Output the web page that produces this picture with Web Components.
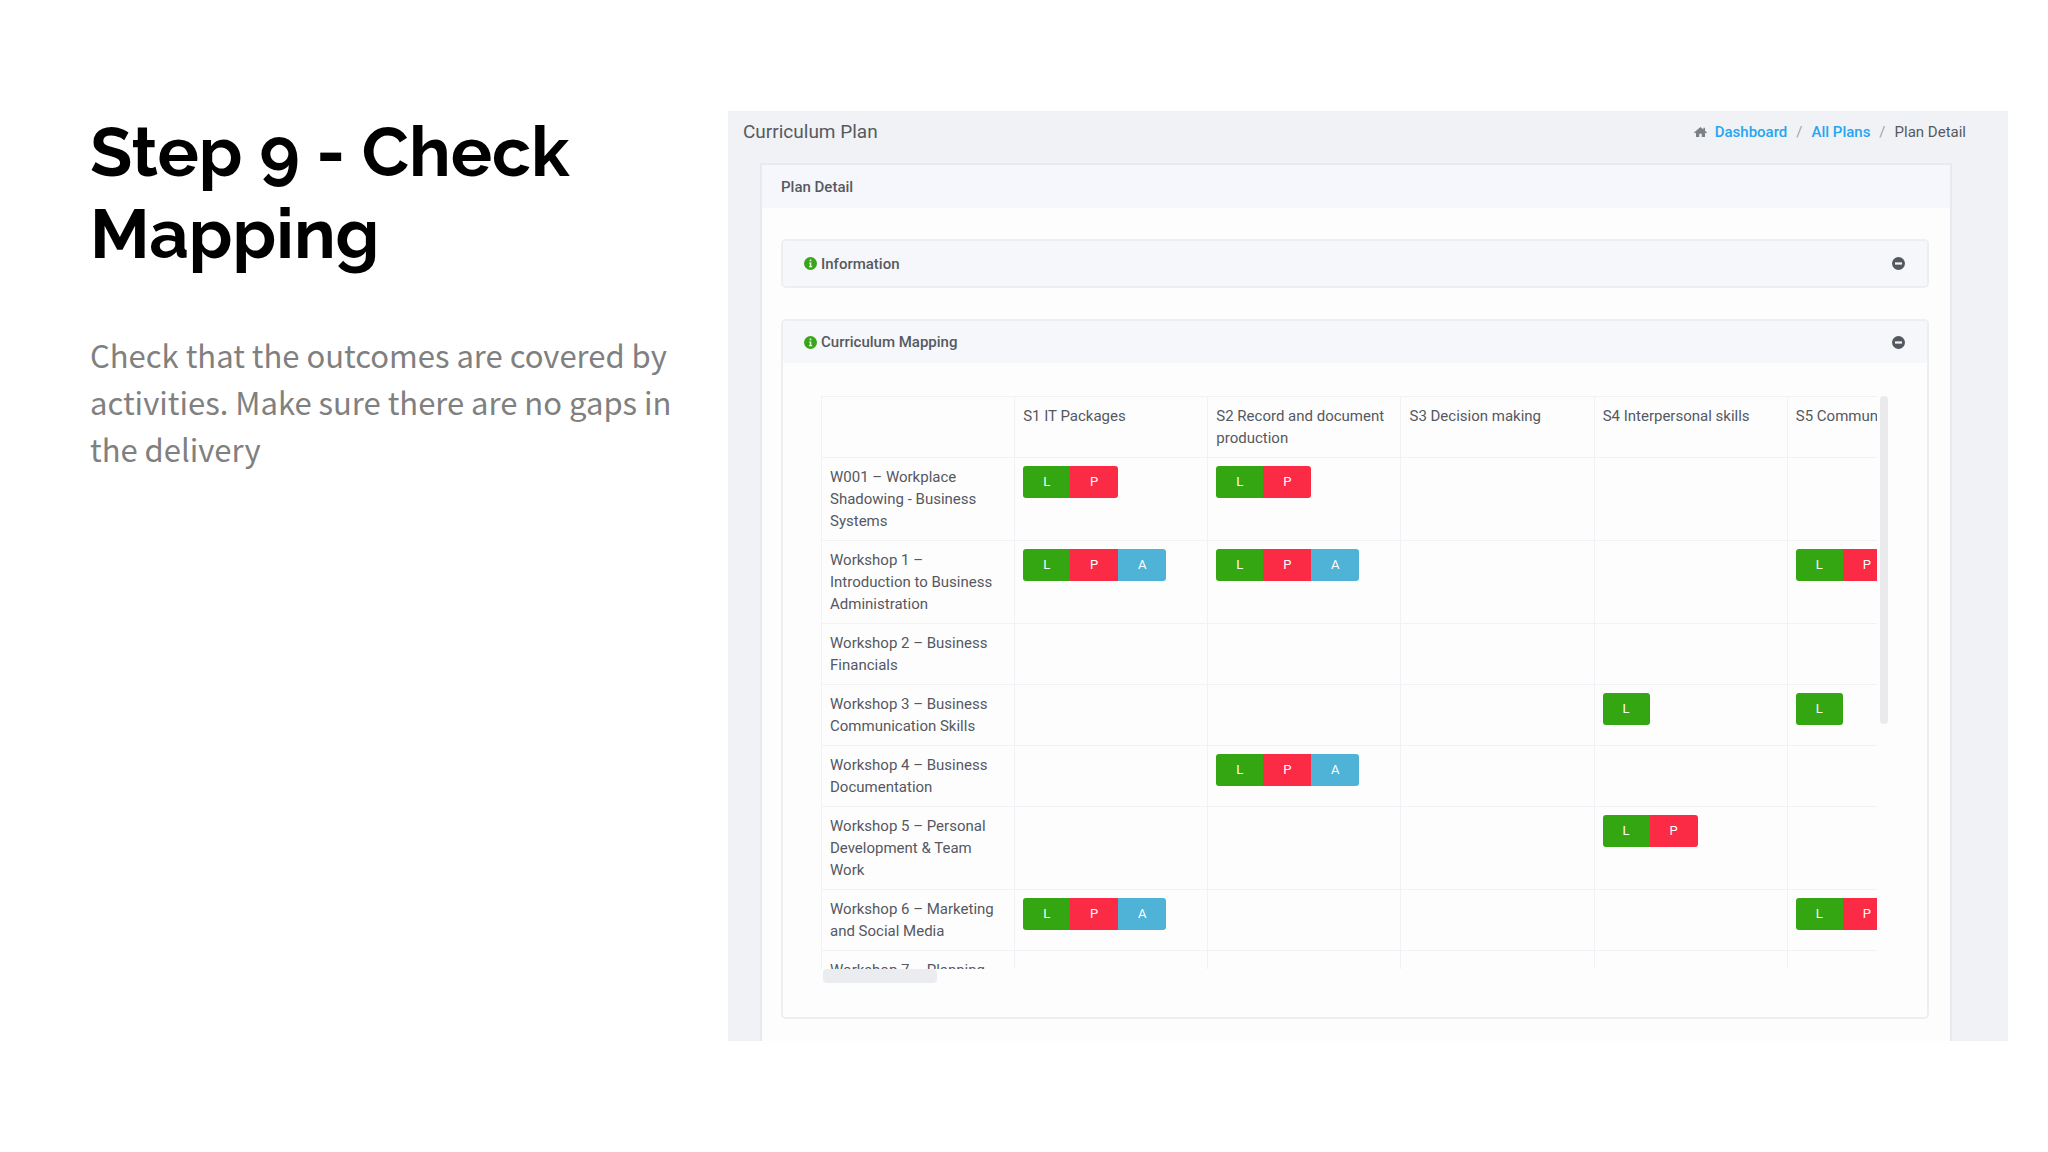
<!DOCTYPE html>
<html lang="en">
<head>
<meta charset="utf-8">
<title>Step 9 - Check Mapping</title>
<style>
  body { margin: 0; background: #fff; font-family: Roboto, "Liberation Sans", sans-serif; }
</style>
</head>
<body>
<training-slide>
  <slide-copy slot="copy">
    <span slot="title">Step 9 - Check Mapping</span>
    Check that the outcomes are covered by activities. Make sure there are no gaps in the delivery
  </slide-copy>
  <app-window>
    <span slot="title">Curriculum Plan</span>
    <crumb-trail slot="trail"></crumb-trail>
    <plan-card>
      <span slot="title">Plan Detail</span>
      <fold-panel closed><span slot="title">Information</span></fold-panel>
      <fold-panel><span slot="title">Curriculum Mapping</span><mapping-table></mapping-table></fold-panel>
    </plan-card>
  </app-window>
</training-slide>

<script>
function define(name, html, setup) {
  const template = document.createElement('template');
  template.innerHTML = html;
  customElements.define(name, class extends HTMLElement {
    connectedCallback() {
      if (this.shadowRoot) return;
      this.attachShadow({ mode: 'open' }).append(template.content.cloneNode(true));
      if (setup) setup(this, this.shadowRoot);
    }
  });
}

define('training-slide', `
  <style>
    :host { display: grid; grid-template-columns: minmax(0, 590fr) minmax(0, 1280fr); gap: 48px;
      padding: 111px 40px 111px 90px; align-items: start; box-sizing: border-box; }
  </style>
  <slot name="copy"></slot>
  <slot></slot>
`);

define('slide-copy', `
  <style>
    :host { display: block; }
    h1 { margin: 0 0 56px; font: 700 69px/82px Raleway, Lato, sans-serif; color: #000; }
    p { margin: 0; font: 400 31px/47px "Source Sans Pro", "Noto Sans CJK SC", sans-serif; color: #808080; }
  </style>
  <h1><slot name="title"></slot></h1>
  <p><slot></slot></p>
`);

define('app-window', `
  <style>
    :host { display: block; background: #f0f2f6; color: #565a60; overflow: hidden; }
    header { display: flex; justify-content: space-between; align-items: center; height: 42px;
      padding: 0 42px 0 15px; margin-bottom: 10px; }
    h2 { margin: 0; font: 400 19px/24px Roboto, sans-serif; }
    main { padding: 0 56px 0 32px; }
  </style>
  <header><h2><slot name="title"></slot></h2><slot name="trail"></slot></header>
  <main><slot></slot></main>
`);

define('crumb-trail', `
  <style>
    :host { display: block; font-size: 15px; line-height: 20px; }
    ol { display: flex; align-items: center; list-style: none; margin: 0; padding: 0; }
    li { display: flex; align-items: center; gap: 8px; }
    li + li::before { content: "/"; color: #a0a4aa; margin-left: 9px; margin-right: 1px; }
    a { color: #27a5ef; font-weight: 500; text-decoration: none; }
    svg { display: block; width: 13px; height: 12px; fill: #7d8187; }
  </style>
  <nav aria-label="Breadcrumb">
    <ol>
      <li><svg viewBox="0 0 13 12" aria-hidden="true"><path d="M6.5 1 0 6.5l.8.9L2 6.5V11h3.3V7.8h2.4V11H11V6.5l1.2.9.8-.9-2-1.7V1.7H9.4v1.7z"/></svg><a href="#dashboard">Dashboard</a></li>
      <li><a href="#plans">All Plans</a></li>
      <li><span aria-current="page">Plan Detail</span></li>
    </ol>
  </nav>
`);

define('plan-card', `
  <style>
    :host { display: block; border: 2px solid #e9eaef; border-bottom: 0; background: #fdfdfe; }
    header { height: 43px; padding: 0 19px; display: flex; align-items: center; background: #f6f7fc; }
    h3 { margin: 0; font: 500 15px/20px Roboto, sans-serif; }
    section { display: grid; gap: 31px; padding: 31px 21px 22px 19px; }
  </style>
  <header><h3><slot name="title"></slot></h3></header>
  <section><slot></slot></section>
`);

define('fold-panel', `
  <style>
    :host { display: block; min-width: 0; border: 2px solid #edeef1; border-radius: 5px; background: #fdfdfe; }
    header { height: 42px; padding: 0 22px 0 21px; display: flex; align-items: center; gap: 4px; background: #f6f7fa; border-radius: 3px; }
    :host([closed]) header { height: 45px; }
    h4 { margin: 0; flex: 1; font: 500 15px/20px Roboto, sans-serif; }
    button { border: 0; background: none; padding: 0; }
    svg { display: block; width: 13px; height: 13px; }
    div { padding: 33px 39px 34px 38px; }
    :host([closed]) div { display: none; }
  </style>
  <header>
    <svg viewBox="0 0 14 14" aria-hidden="true"><circle cx="7" cy="7" r="7" fill="#3aa51c"/><path d="M5.5 5.8h2.4v4h.9V11H5.4V9.8h.8V7h-.7zM6.1 2.8h1.8v1.8H6.1z" fill="#e4f7dd"/></svg>
    <h4><slot name="title"></slot></h4>
    <button type="button" aria-label="Toggle panel"><svg viewBox="0 0 14 14" aria-hidden="true"><circle cx="7" cy="7" r="7" fill="#55585f"/><path d="M3.2 5.8h7.6v2.4H3.2z" fill="#f5f7fa"/></svg></button>
  </header>
  <div><slot></slot></div>
`, (host, root) => {
  root.querySelector('button').addEventListener('click', () => host.toggleAttribute('closed'));
});

define('level-group', `
  <style>
    :host { display: inline-flex; border-radius: 3px; overflow: hidden; vertical-align: top; }
    button { border: 0; margin: 0; padding: 0; width: 48px; height: 32px; color: #fff;
      font: 400 13px/32px Roboto, sans-serif; }
    .L { background: #34a612; width: 47px; }
    .P { background: #fb2b45; }
    .A { background: #4fb3d8; }
  </style>
`, (host, root) => {
  for (const level of host.getAttribute('levels')) {
    const button = document.createElement('button');
    button.type = 'button';
    button.className = level;
    button.textContent = level;
    root.append(button);
  }
});

define('mapping-table', `
  <style>
    :host { display: grid; grid-template-columns: minmax(0, 1fr) 8px; column-gap: 3px; }
    .view { overflow: hidden; height: 573px; }
    table { border-collapse: collapse; table-layout: fixed; width: 1160px; font-size: 15px; line-height: 22px; color: #55585e; }
    th, td { border: 1px solid #f2f1f5; padding: 8px 7px 8px 8px; text-align: left; vertical-align: top; font-weight: 400; }
    .down { height: 328px; background: #eae9ec; border-radius: 4px; }
    .across { width: 114px; height: 14px; margin-left: 2px; background: #ebecef; border-radius: 4px; }
  </style>
  <div class="view"><table><thead><tr></tr></thead><tbody></tbody></table></div>
  <div class="down"></div>
  <div class="across"></div>
`, (host, root) => {
  const skills = ['', 'S1 IT Packages', 'S2 Record and document production', 'S3 Decision making', 'S4 Interpersonal skills', 'S5 Communication'];
  const rows = [
    ['W001 – Workplace Shadowing - Business Systems', 'LP', 'LP', '', '', ''],
    ['Workshop 1 – Introduction to Business Administration', 'LPA', 'LPA', '', '', 'LP'],
    ['Workshop 2 – Business Financials', '', '', '', '', ''],
    ['Workshop 3 – Business Communication Skills', '', '', '', 'L', 'L'],
    ['Workshop 4 – Business Documentation', '', 'LPA', '', '', ''],
    ['Workshop 5 – Personal Development & Team Work', '', '', '', 'LP', ''],
    ['Workshop 6 – Marketing and Social Media', 'LPA', '', '', '', 'LP'],
    ['Workshop 7 – Planning', '', '', '', '', '']
  ];
  const head = root.querySelector('thead tr');
  for (const skill of skills) {
    const cell = document.createElement(skill ? 'th' : 'td');
    cell.textContent = skill;
    head.append(cell);
  }
  for (const [name, ...levels] of rows) {
    const row = root.querySelector('tbody').insertRow();
    const label = document.createElement('th');
    label.scope = 'row';
    label.textContent = name;
    row.append(label);
    for (const level of levels) {
      const cell = row.insertCell();
      if (level) {
        const group = document.createElement('level-group');
        group.setAttribute('levels', level);
        cell.append(group);
      }
    }
  }
});
</script>
</body>
</html>
